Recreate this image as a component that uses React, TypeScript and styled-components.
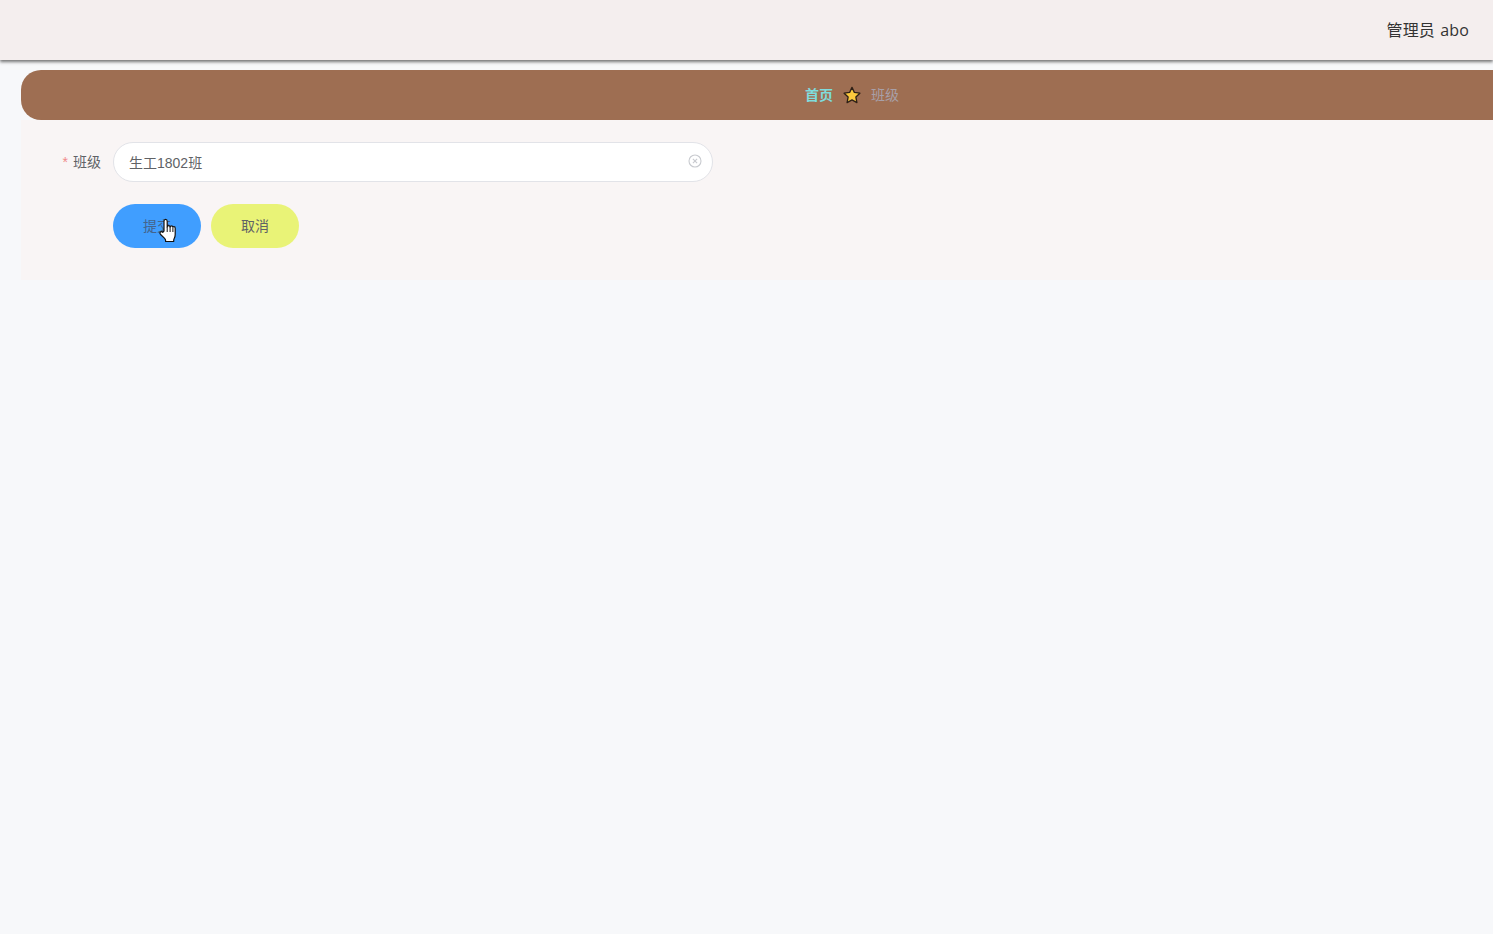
import React from 'react'
import styled, { createGlobalStyle } from 'styled-components'

const GlobalStyle = createGlobalStyle`
  html, body {
    margin: 0;
    padding: 0;
    height: 100%;
    overflow: hidden;
    background: #f7f8fa;
    font-family: "Liberation Sans", "Noto Sans CJK SC", sans-serif;
  }
`

const Page = styled.div`
  width: 100%;
  height: 934px;
  background: #f7f8fa;
`

const Header = styled.header`
  height: 60px;
  box-sizing: border-box;
  display: flex;
  align-items: center;
  justify-content: flex-end;
  padding-right: 24px;
  background: #f4eeee;
  box-shadow: 0 2px 3px rgba(60, 60, 60, 0.7);
`

const UserName = styled.div`
  font-family: "Open Sans", "Noto Sans CJK SC", sans-serif;
  font-size: 16px;
  letter-spacing: 0.15px;
  word-spacing: 1px;
  color: #333333;
  padding-bottom: 2px;
`

const Main = styled.main`
  padding: 10px 0 0 21px;
`

const Breadcrumb = styled.nav`
  height: 50px;
  display: flex;
  align-items: center;
  justify-content: center;
  gap: 10px;
  padding-left: 190px;
  background: #9e6e52;
  border-radius: 20px 0 0 20px;
  font-size: 14px;
`

const Crumb = styled.span<{ $active?: boolean }>`
  padding-bottom: 2px;
  font-weight: ${(p) => (p.$active ? 700 : 400)};
  color: ${(p) => (p.$active ? '#7fdcdc' : '#a8a0a8')};
`

const FormPanel = styled.form`
  height: 160px;
  box-sizing: border-box;
  padding-top: 22px;
  background: #f9f5f5;
  display: flex;
  flex-direction: column;
  gap: 22px;
`

const FormRow = styled.div`
  display: flex;
  align-items: center;
`

const Label = styled.label`
  width: 92px;
  box-sizing: border-box;
  padding-right: 12px;
  text-align: right;
  font-size: 14px;
  color: #606266;
  margin-top: -3px;
`

const Required = styled.span`
  color: #f08a8a;
  margin-right: 5px;
`

const InputBox = styled.div`
  position: relative;
  width: 600px;
  height: 40px;
`

const TextInput = styled.input`
  width: 100%;
  height: 100%;
  box-sizing: border-box;
  padding: 0 40px 1px 15px;
  background: #ffffff;
  border: 1px solid #e2e3e8;
  border-radius: 20px;
  outline: none;
  font-family: inherit;
  font-size: 14px;
  color: #606266;
`

const ClearIcon = styled.svg`
  position: absolute;
  top: 12px;
  right: 11px;
  width: 14px;
  height: 14px;
`

const Actions = styled.div`
  display: flex;
  gap: 10px;
  margin-left: 92px;
`

const Button = styled.button<{ $bg: string; $fg: string }>`
  position: relative;
  width: 88px;
  height: 44px;
  padding: 0 0 2px;
  border: none;
  border-radius: 22px;
  background: ${(p) => p.$bg};
  font-family: inherit;
  font-size: 14px;
  color: ${(p) => p.$fg};
`

const HandCursor = styled.svg`
  position: absolute;
  left: 46px;
  top: 14px;
  width: 17px;
  height: 25px;
`

const Star = () => (
  <svg width="18" height="18" viewBox="0 0 24 24">
    <path
      d="M12 1.8l3.2 6.8 7.3 1-5.3 5.2 1.3 7.4-6.5-3.6-6.5 3.6 1.3-7.4L1.5 9.6l7.3-1z"
      fill="#fbc93d"
      stroke="#2e2016"
      strokeWidth="1.8"
      strokeLinejoin="round"
    />
  </svg>
)

export default function App() {
  return (
    <Page>
      <GlobalStyle />
      <Header>
        <UserName>管理员 abo</UserName>
      </Header>
      <Main>
        <Breadcrumb>
          <Crumb $active>首页</Crumb>
          <Star />
          <Crumb>班级</Crumb>
        </Breadcrumb>
        <FormPanel onSubmit={(e) => e.preventDefault()}>
          <FormRow>
            <Label>
              <Required>*</Required>班级
            </Label>
            <InputBox>
              <TextInput defaultValue="生工1802班" />
              <ClearIcon viewBox="0 0 14 14" fill="none" stroke="#c8cacf">
                <circle cx="7" cy="7" r="6" strokeWidth="1.1" />
                <path d="M4.9 4.9l4.2 4.2M9.1 4.9l-4.2 4.2" strokeWidth="1.1" />
              </ClearIcon>
            </InputBox>
          </FormRow>
          <Actions>
            <Button $bg="#409eff" $fg="#44648c" type="submit">
              提交
              <HandCursor viewBox="0 0 17 25">
                <path
                  d="M5 13V3.2C5 2 5.7 1.3 6.6 1.3S8.2 2 8.2 3.2V9c.2-1 .8-1.4 1.5-1.4s1.3.5 1.4 1.4c.2-.8.8-1.2 1.4-1.2.8 0 1.3.6 1.4 1.500.3-.5.7-.7 1.100-.7.7 0 1.200.6 1.200 1.600v6.300c0 1.500-.3 2.600-.9 3.700-.4.8-.6 1.600-.6 2.500v.8H6.600v-.9c0-.8-.4-1.500-1-2.200L1.600 16.500c-.7-.9-.8-1.900-.2-2.500.7-.6 1.700-.4 2.400.3z"
                  fill="#ffffff"
                  stroke="#111111"
                  strokeWidth="1.2"
                  strokeLinejoin="round"
                />
                <path d="M8.2 9v5M11.100 9v5M13.900 10v4" stroke="#111111" strokeWidth="1" />
              </HandCursor>
            </Button>
            <Button $bg="#e9f377" $fg="#606266" type="button">
              取消
            </Button>
          </Actions>
        </FormPanel>
      </Main>
    </Page>
  )
}
